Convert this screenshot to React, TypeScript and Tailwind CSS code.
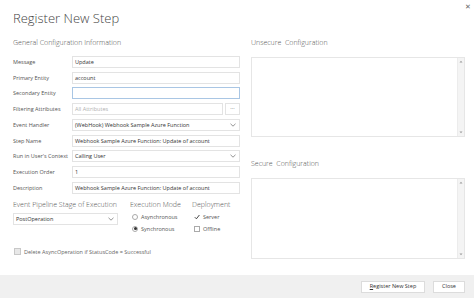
import React from "react";

const font = { fontFamily: '"Open Sans", "Noto Sans", sans-serif' };

function Chevron() {
  return (
    <svg width="6" height="4" viewBox="0 0 6 4" className="shrink-0">
      <path d="M0.5 0.8 L3 3.2 L5.5 0.8" fill="none" stroke="#777" strokeWidth="0.8" />
    </svg>
  );
}

function Row({ label, children }: { label: string; children: React.ReactNode }) {
  return (
    <div className="flex items-center h-[15.75px]">
      <div className="w-[59px] shrink-0 text-[5.5px] text-[#555] whitespace-nowrap">{label}</div>
      <div className="flex-1 flex">{children}</div>
    </div>
  );
}

function TextBox({ value, focused, placeholder }: { value?: string; focused?: boolean; placeholder?: string }) {
  return (
    <div
      className={`flex-1 h-[12px] border ${focused ? "border-[#a9c6e4]" : "border-[#e3e3e3]"} bg-white flex items-center px-[2px] text-[5.5px] ${placeholder ? "text-[#b0b0b0]" : "text-[#333]"} whitespace-nowrap overflow-hidden`}
    >
      {value ?? placeholder}
    </div>
  );
}

function SelectBox({ value, className }: { value: string; className?: string }) {
  return (
    <div
      className={`flex-1 h-[12px] border border-[#e3e3e3] bg-white flex items-center justify-between pl-[2px] pr-[3px] text-[5.5px] text-[#333] whitespace-nowrap ${className ?? ""}`}
    >
      <span>{value}</span>
      <Chevron />
    </div>
  );
}

function ScrollArea({ h }: { h: string }) {
  return (
    <div className={`${h} border border-[#e6e6e6] bg-white flex justify-end`}>
      <div className="w-[7px] h-full bg-[#f4f4f4] border-l border-[#ececec] flex flex-col justify-between items-center py-[2px]">
        <svg width="4" height="3" viewBox="0 0 4 3">
          <path d="M0.5 2.5 L2 0.8 L3.5 2.5 Z" fill="#9a9a9a" />
        </svg>
        <svg width="4" height="3" viewBox="0 0 4 3">
          <path d="M0.5 0.5 L2 2.2 L3.5 0.5 Z" fill="#9a9a9a" />
        </svg>
      </div>
    </div>
  );
}

export default function App() {
  return (
    <div className="w-[474px] h-[298px] bg-white relative overflow-hidden flex flex-col" style={font}>
      <div className="absolute top-[4px] right-[3px] text-[6.5px] text-[#666] leading-none">✕</div>
      <div className="h-[275px] flex flex-col">
        <div className="h-[35px] pl-[13px] pt-[8px]">
          <div className="text-[13px] font-light text-[#444] leading-[20px]">Register New Step</div>
        </div>
        <div className="flex pl-[13px] pr-[9px] gap-[11px]">
          {/* Left column */}
          <div className="w-[227px] flex flex-col">
            <div className="h-[16px] leading-[16px] text-[7px] font-light text-[#555]">General Configuration Information</div>
            <div className="mt-[3px] flex flex-col">
              <Row label="Message"><TextBox value="Update" /></Row>
              <Row label="Primary Entity"><TextBox value="account" /></Row>
              <Row label="Secondary Entity"><TextBox value="" focused /></Row>
              <Row label="Filtering Attributes">
                <TextBox placeholder="All Attributes" />
                <div className="ml-[2px] w-[15px] h-[12px] border border-[#e3e3e3] bg-white flex items-center justify-center text-[5.5px] text-[#666] leading-none pb-[2px]">...</div>
              </Row>
              <Row label="Event Handler"><SelectBox value="(WebHook) Webhook Sample Azure Function" /></Row>
              <Row label="Step Name"><TextBox value="Webhook Sample Azure Function: Update of account" /></Row>
              <Row label="Run in User's Context"><SelectBox value="Calling User" /></Row>
              <Row label="Execution Order"><TextBox value="1" /></Row>
              <Row label="Description"><TextBox value="Webhook Sample Azure Function: Update of account" /></Row>
            </div>
            <div className="mt-[3px] flex">
              <div className="w-[105px] flex flex-col">
                <div className="h-[12px] leading-[12px] text-[7px] font-light text-[#555] whitespace-nowrap">Event Pipeline Stage of Execution</div>
                <div className="mt-[2px] flex">
                  <SelectBox value="PostOperation" className="h-[11px]" />
                </div>
              </div>
              <div className="ml-[12px] w-[62px] flex flex-col">
                <div className="h-[12px] leading-[12px] text-[7px] font-light text-[#555] whitespace-nowrap">Execution Mode</div>
                <div className="h-[12px] flex items-center gap-[3px] pl-[2px]">
                  <span className="w-[6px] h-[6px] rounded-full border border-[#aaa] bg-white" />
                  <span className="text-[5.5px] text-[#555]">Asynchronous</span>
                </div>
                <div className="h-[12px] flex items-center gap-[3px] pl-[2px]">
                  <span className="w-[6px] h-[6px] rounded-full border border-[#aaa] bg-white flex items-center justify-center">
                    <span className="w-[3px] h-[3px] rounded-full bg-[#333]" />
                  </span>
                  <span className="text-[5.5px] text-[#555]">Synchronous</span>
                </div>
              </div>
              <div className="w-[45px] flex flex-col">
                <div className="h-[12px] leading-[12px] text-[7px] font-light text-[#555] whitespace-nowrap">Deployment</div>
                <div className="h-[12px] flex items-center gap-[3px] pl-[2px]">
                  <svg width="6" height="6" viewBox="0 0 6 6">
                    <path d="M0.8 3.2 L2.4 4.8 L5.4 1" fill="none" stroke="#333" strokeWidth="0.9" />
                  </svg>
                  <span className="text-[5.5px] text-[#555]">Server</span>
                </div>
                <div className="h-[12px] flex items-center gap-[3px] pl-[2px]">
                  <span className="w-[6px] h-[6px] border border-[#aaa] bg-white" />
                  <span className="text-[5.5px] text-[#555]">Offline</span>
                </div>
              </div>
            </div>
            <div className="mt-[11px] h-[12px] flex items-center gap-[3px] pl-[1px]">
              <span className="w-[7px] h-[7px] border border-[#c8c8c8] bg-[#e8e8e8]" />
              <span className="text-[5.5px] text-[#666]">Delete AsyncOperation if StatusCode = Successful</span>
            </div>
          </div>
          {/* Right column */}
          <div className="flex-1 flex flex-col">
            <div className="h-[16px] leading-[16px] text-[7px] font-light text-[#555]">Unsecure&nbsp; Configuration</div>
            <div className="mt-[6px]"><ScrollArea h="h-[80px]" /></div>
            <div className="mt-[19px] h-[16px] leading-[16px] text-[7px] font-light text-[#555]">Secure&nbsp; Configuration</div>
            <div className="mt-[6px]"><ScrollArea h="h-[81px]" /></div>
          </div>
        </div>
      </div>
      <div className="h-[23px] bg-[#f0f0f0] flex items-center justify-end pr-[9px] gap-[8px]">
        <div className="w-[64px] h-[12px] bg-white border border-[#dcdcdc] flex items-center justify-center text-[5.5px] text-[#333]">
          <span><span className="underline">R</span>egister New Step</span>
        </div>
        <div className="w-[32px] h-[12px] bg-white border border-[#dcdcdc] flex items-center justify-center text-[5.5px] text-[#333]">Close</div>
      </div>
    </div>
  );
}
